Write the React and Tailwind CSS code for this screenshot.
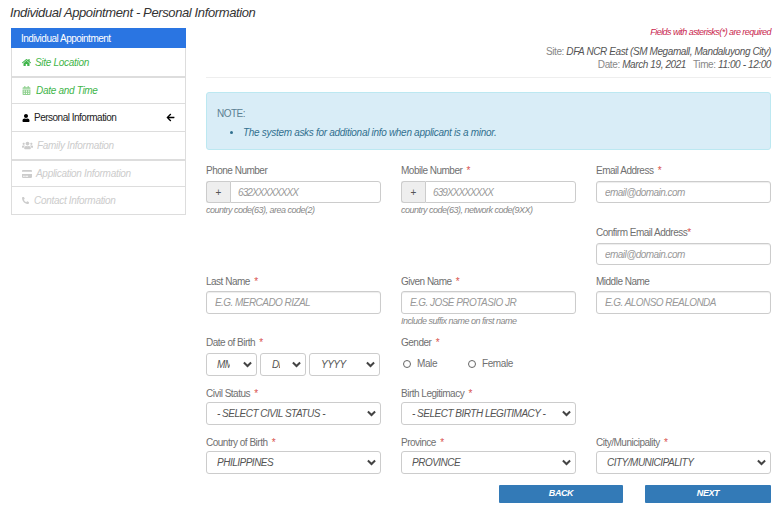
import { FaHome, FaCalendarAlt, FaUser, FaArrowLeft, FaUsers, FaCreditCard, FaPhone } from "react-icons/fa";

const inputCls = "block w-full bg-white border border-[#ccc] rounded-[3px] px-[8px] text-[10px] tracking-[-0.55px] italic text-[#555] placeholder:text-[#999] shadow-[inset_0_1px_1px_rgba(0,0,0,0.075)] outline-none";

const Label = ({ children, req, mb = "mb-[4px]" }) => (
  <label className={"block h-[11px] leading-[11px] text-[10px] tracking-[-0.5px] text-[#707070] " + mb}>
    {children}
    {req && <span className="ml-[2px] text-[#d9534f]"> *</span>}
  </label>
);

const Help = ({ children }) => (
  <p className="mt-[2px] text-[9px] tracking-[-0.5px] leading-[10px] italic text-[#888]">{children}</p>
);

const PhoneInput = ({ placeholder }) => (
  <div className="flex h-[22px]">
    <span className="w-[24px] shrink-0 flex items-center justify-center bg-[#eee] border border-r-0 border-[#ccc] rounded-l-[3px] text-[10px] text-[#555]">+</span>
    <input placeholder={placeholder} className="flex-1 min-w-0 bg-white border border-[#ccc] rounded-r-[3px] px-[7px] text-[10px] tracking-[-0.9px] italic placeholder:text-[#999] outline-none" />
  </div>
);

const Select = ({ children, className = "w-full pl-[10px] pr-[20px]" }) => (
  <div className={"relative " + (className.includes("w-full") ? "w-full" : "shrink-0")}>
    <select className={"block appearance-none h-[23px] bg-white border border-[#ccc] rounded-[3px] text-[10px] tracking-[-0.5px] italic text-[#555] outline-none " + className}>
      <option>{children}</option>
    </select>
    <svg viewBox="0 0 10 7" className="absolute right-[5px] top-[8px] w-[9px] h-[7px] pointer-events-none" fill="none" stroke="#444" strokeWidth="2.2">
      <path d="M1 1.2 L5 5.2 L9 1.2" />
    </svg>
  </div>
);

const Radio = ({ label, className = "" }) => (
  <span className={"flex items-center gap-[6px] text-[10px] tracking-[-0.4px] text-[#707070] " + className}>
    <span className="w-[8px] h-[8px] rounded-full border border-[#666]"></span>
    {label}
  </span>
);

const steps = [
  { label: "Site Location", icon: FaHome, iconCls: "text-[#3fb54a] text-[9px]", cls: "italic tracking-[-0.3px] text-[#3fb54a] h-[28px]", gap: "gap-[4px]" },
  { label: "Date and Time", icon: FaCalendarAlt, iconCls: "text-[#8fd08f] text-[9px]", cls: "italic tracking-[-0.3px] text-[#3fb54a] h-[27px] border-t-2", gap: "gap-[5px]" },
  { label: "Personal Information", icon: FaUser, iconCls: "text-black text-[8px]", cls: "tracking-[-0.5px] text-[#222] h-[28px] border-t", gap: "gap-[4px]", current: true },
  { label: "Family Information", icon: FaUsers, iconCls: "text-[#ccc] text-[11px]", cls: "italic tracking-[-0.3px] text-[#ccc] h-[28px] border-t", gap: "gap-[4px]" },
  { label: "Application Information", icon: FaCreditCard, iconCls: "text-[#ccc] text-[10px]", cls: "italic tracking-[-0.3px] text-[#ccc] h-[27px] border-t-2", gap: "gap-[4px]" },
  { label: "Contact Information", icon: FaPhone, iconCls: "text-[#ccc] text-[7px] -scale-x-100", cls: "italic tracking-[-0.3px] text-[#ccc] h-[28px] border-t", gap: "gap-[5px]" },
];

export default function App() {
  return (
    <div className="w-[783px] h-[509px] bg-white overflow-hidden font-['Liberation_Sans',Arial,sans-serif]">
      <h1 className="pl-[10px] pt-[5px] h-[28px] text-[13px] tracking-[-0.38px] leading-[16px] italic text-[#333]">
        Individual Appointment - Personal Information
      </h1>

      <div className="flex">
        <aside className="ml-[11px] w-[175px] shrink-0">
          <div className="h-[20px] flex items-center pl-[10px] bg-[#2a75e2] text-white text-[10px] tracking-[-0.5px]">Individual Appointment</div>
          <div className="border-x border-b border-[#ddd]">
            {steps.map((s) => {
              const Icon = s.icon;
              return (
                <div key={s.label} className={"flex items-center pl-[10px] pr-[10px] text-[10px] border-[#ddd] " + s.gap + " " + s.cls}>
                  <Icon className={s.iconCls} />
                  <span>{s.label}</span>
                  {s.current && <FaArrowLeft className="ml-auto text-[9px] text-black" />}
                </div>
              );
            })}
          </div>
        </aside>

        <main className="ml-[20px] w-[565px] -mt-[2px]">
          <p className="text-right text-[9px] tracking-[-0.55px] leading-[10px] italic text-[#c9254e] mt-[1px]">Fields with asterisks(*) are required</p>
          <div className="mt-[8px] text-right text-[10px] tracking-[-0.4px] leading-[13px] text-[#888] pb-[6px] border-b border-[#eee]">
            <p>Site: <i className="text-[#555]">DFA NCR East (SM Megamall, Mandaluyong City)</i></p>
            <p>Date: <i className="text-[#555]">March 19, 2021</i>&nbsp;&nbsp; Time: <i className="text-[#555]">11:00 - 12:00</i></p>
          </div>

          <div className="mt-[14px] h-[58px] bg-[#d9edf7] border border-[#bce8f1] rounded-[3px] px-[10px] pt-[15px] text-[10px] text-[#31708f]">
            <p className="leading-[12px] tracking-[-0.5px] text-[#5b7f92]">NOTE:</p>
            <ul className="list-disc ml-[26px] mt-[7px] italic tracking-[-0.3px]">
              <li className="leading-[12px]">The system asks for additional info when applicant is a minor.</li>
            </ul>
          </div>

          <div className="mt-[15px] grid grid-cols-3 gap-x-[20px]">
            <div>
              <Label mb="mb-[5px]">Phone Number</Label>
              <PhoneInput placeholder="632XXXXXXXX" />
              <Help>country code(63), area code(2)</Help>
            </div>
            <div>
              <Label req mb="mb-[5px]">Mobile Number</Label>
              <PhoneInput placeholder="639XXXXXXXX" />
              <Help>country code(63), network code(9XX)</Help>
            </div>
            <div>
              <Label req mb="mb-[5px]">Email Address</Label>
              <input placeholder="email@domain.com" className={inputCls + " h-[22px]"} />
            </div>

            <div className="col-start-3 mt-[12px]">
              <label className="block h-[11px] leading-[11px] mb-[5px] text-[10px] tracking-[-0.5px] text-[#707070]">
                Confirm Email Address<span className="text-[#d9534f]">*</span>
              </label>
              <input placeholder="email@domain.com" className={inputCls + " h-[22px]"} />
            </div>

            <div className="mt-[11px]">
              <Label req>Last Name</Label>
              <input placeholder="E.G. MERCADO RIZAL" className={inputCls + " h-[23px]"} />
            </div>
            <div className="mt-[11px]">
              <Label req>Given Name</Label>
              <input placeholder="E.G. JOSÉ PROTASIO JR" className={inputCls + " h-[23px]"} />
              <Help>Include suffix name on first name</Help>
            </div>
            <div className="mt-[11px]">
              <Label>Middle Name</Label>
              <input placeholder="E.G. ALONSO REALONDA" className={inputCls + " h-[23px]"} />
            </div>

            <div className="mt-[11px]">
              <Label req mb="mb-[5px]">Date of Birth</Label>
              <div className="flex gap-[3px]">
                <Select className="w-[51px] pl-[10px] pr-[26px]">MM</Select>
                <Select className="w-[46px] pl-[11px] pr-[25px]">DD</Select>
                <Select className="w-[71px] pl-[11px] pr-[20px]">YYYY</Select>
              </div>
            </div>
            <div className="mt-[11px]">
              <Label req mb="mb-[5px]">Gender</Label>
              <div className="flex pt-[3px] pl-[2px]">
                <Radio label="Male" className="w-[65px]" />
                <Radio label="Female" />
              </div>
            </div>
            <div></div>

            <div className="mt-[12px]">
              <Label req mb="mb-[3px]">Civil Status</Label>
              <Select>- SELECT CIVIL STATUS -</Select>
            </div>
            <div className="mt-[12px]">
              <Label req mb="mb-[3px]">Birth Legitimacy</Label>
              <Select>- SELECT BIRTH LEGITIMACY -</Select>
            </div>
            <div></div>

            <div className="mt-[12px]">
              <Label req mb="mb-[3px]">Country of Birth</Label>
              <Select>PHILIPPINES</Select>
            </div>
            <div className="mt-[12px]">
              <Label req mb="mb-[3px]">Province</Label>
              <Select>PROVINCE</Select>
            </div>
            <div className="mt-[12px]">
              <Label req mb="mb-[3px]">City/Municipality</Label>
              <Select>CITY/MUNICIPALITY</Select>
            </div>
          </div>

          <div className="mt-[11px] flex justify-end gap-[22px]">
            <button className="w-[124px] h-[18px] bg-[#337ab7] rounded-[1px] text-white text-[9px] tracking-[-0.4px] font-bold italic">BACK</button>
            <button className="w-[126px] h-[18px] bg-[#337ab7] rounded-[1px] text-white text-[9px] tracking-[-0.4px] font-bold italic">NEXT</button>
          </div>
        </main>
      </div>
    </div>
  );
}
